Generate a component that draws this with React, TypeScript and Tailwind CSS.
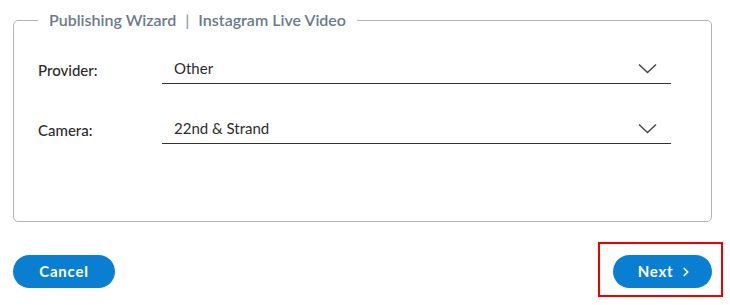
import { ChevronRight } from "lucide-react";

const font = { fontFamily: "Lato, 'Open Sans', sans-serif" };

function Chevron() {
  return (
    <svg width="19" height="11" viewBox="0 0 19 11" fill="none" className="shrink-0">
      <polyline points="1,1.5 9.5,9.5 18,1.5" stroke="#444" strokeWidth="1.4" />
    </svg>
  );
}

function SelectRow({ label, value }: { label: string; value: string }) {
  return (
    <div className="flex items-center">
      <div className="w-[124px] mt-[4px] text-[15px] text-[#2b2b2b] font-medium">{label}</div>
      <div className="flex-1 h-[31px] border-b-[1.5px] border-[#333] flex items-center justify-between pl-[12px] pr-[14px]">
        <span className="text-[15px] text-[#2b2b2b]">{value}</span>
        <Chevron />
      </div>
    </div>
  );
}

export default function App() {
  return (
    <div className="w-[730px] h-[305px] bg-white pl-[13px] pr-[18px] pt-[10px]" style={font}>
      <fieldset className="border border-[#b3b3b3] rounded-[5px] pl-[24px] pr-[40px] pb-[77px]">
        <legend className="px-[11px] text-[16px] leading-[20px] font-semibold text-[#6b7a8b]">
          Publishing Wizard <span className="mx-[5px] text-[#8fa0b2]">|</span> Instagram Live Video
        </legend>
        <div className="pt-[23px] flex flex-col gap-[29px]">
          <SelectRow label="Provider:" value="Other" />
          <SelectRow label="Camera:" value="22nd & Strand" />
        </div>
      </fieldset>
      <div className="flex justify-between mt-[33px]">
        <button className="w-[102px] h-[33px] rounded-full bg-[#0a7fd2] text-white text-[15px] font-bold tracking-[0.05em]">
          Cancel
        </button>
        <div className="relative">
          <button className="w-[99px] h-[33px] rounded-full bg-[#0a7fd2] text-white text-[15px] font-bold tracking-[0.05em] flex items-center justify-center gap-[6px] pl-[6px]">
            Next
            <ChevronRight size={14} strokeWidth={3} />
          </button>
          <div className="absolute left-[-15px] right-[-11px] top-[-13px] bottom-[-9px] border-2 border-[#ee0000] pointer-events-none" />
        </div>
      </div>
    </div>
  );
}
